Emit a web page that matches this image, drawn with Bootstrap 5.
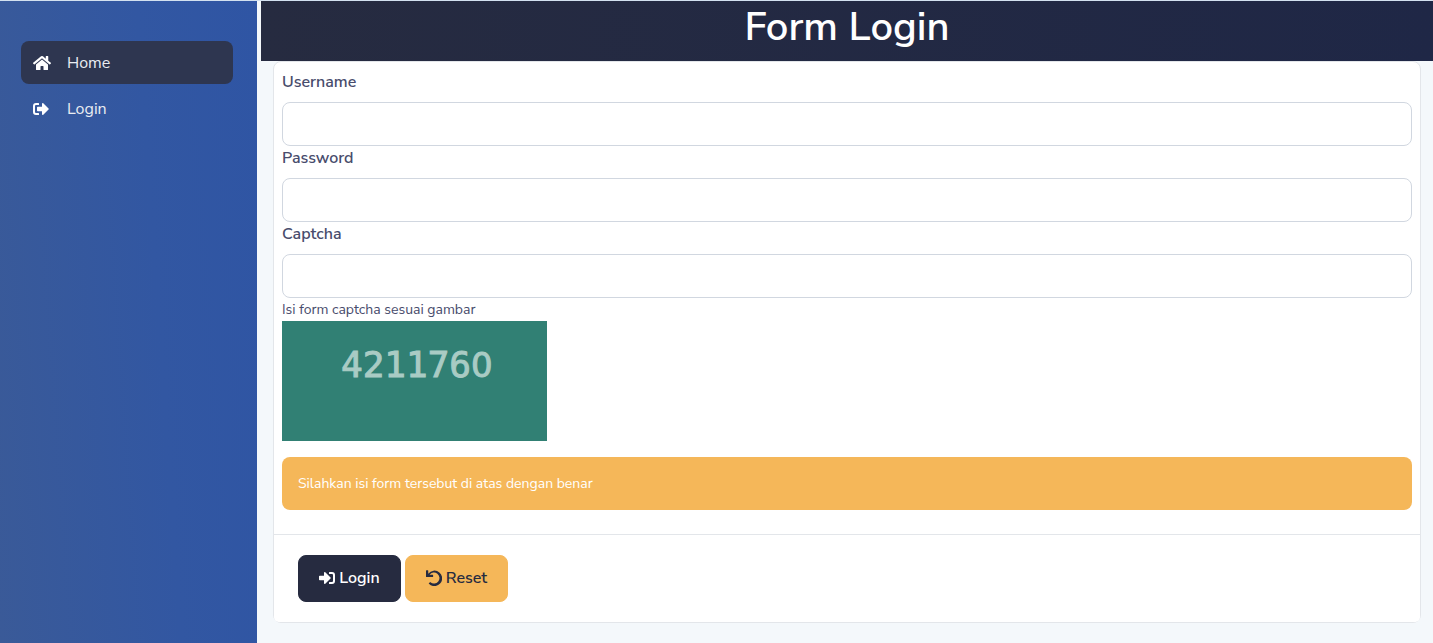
<!DOCTYPE html>
<html lang="id">
<head>
<meta charset="utf-8">
<meta name="viewport" content="width=device-width, initial-scale=1">
<title>Form Login</title>
<link href="https://cdn.jsdelivr.net/npm/bootstrap@5.3.0/dist/css/bootstrap.min.css" rel="stylesheet">
<style>
  body { font-family: "Nunito Sans", Nunito, Lato, sans-serif; font-size: 16px; line-height: 24px; color: #484c6c; background: #f4f8fb; border-top: 1px solid #d3e1f0; }
  svg { fill: currentColor; }
  .sidebar { width: 257px; padding: 40px 24px 24px 21px; background: linear-gradient(86deg, #3a5a98, #3257a2 60%, #2f55a4); }
  .sidebar .nav { gap: 3px; }
  .sidebar .nav-link { color: #eaedf2; height: 43px; padding: 0 12px; border-radius: 8px; font-size: 16px; }
  .sidebar .nav-link.active { background: #2e3650; }
  .sidebar .nav-link svg { width: 18px; height: 16px; margin-right: 16px; color: #fff; }
  .content { margin-left: 4px; }
  .page-title { height: 60px; font-size: 40px; line-height: 52px; font-weight: 600; color: #fff; background: linear-gradient(90deg, #262b40, #1f2746); }
  .login-card { border-color: #e3e6ea; border-radius: 8px; }
  .form-label { font-size: 16px; line-height: 24px; font-weight: 600; margin-bottom: 8px; }
  .login-card .form-control { height: 44px; border-color: #d1d7e0; border-radius: 8px; }
  .login-card .form-text { font-size: 14px; line-height: 23px; margin: 0; color: #484c6c; }
  .captcha { width: 265px; height: 120px; background: #318074; }
  .captcha text { font: 36px "DejaVu Sans Mono", monospace; fill: #a9cbc4; stroke: #a9cbc4; stroke-width: 1px; }
  .captcha .zero { font: 34px "DejaVu Sans", sans-serif; }
  .alert-note { background: #f5b759; color: #fff; border: 0; border-radius: 8px; font-size: 14px; line-height: 21px; padding: 16px; margin: 16px 0; }
  .login-card .card-footer { background: #fff; border-color: #e3e6ea; padding: 20px 24px; }
  .login-card .btn { width: 103px; height: 47px; padding: 0 0 2px; font-size: 16px; font-weight: 600; border-radius: 8px; }
  .login-card .btn svg { width: 16px; height: 16px; }
  .btn-dark-navy, .btn-dark-navy:hover { background: #262b40; color: #fff; border-color: #262b40; }
  .btn-amber, .btn-amber:hover { background: #f5b759; color: #262b40; border-color: #f5b759; }
</style>
</head>
<body class="d-flex min-vh-100">
<nav class="sidebar flex-shrink-0" aria-label="Menu">
  <ul class="nav flex-column">
    <li class="nav-item"><a class="nav-link active d-flex align-items-center" href="#">
      <svg viewBox="0 0 576 512" aria-hidden="true"><path d="M280 148 96 300v164a16 16 0 0 0 16 16h112a16 16 0 0 0 16-16v-96a16 16 0 0 1 16-16h64a16 16 0 0 1 16 16v96a16 16 0 0 0 16 16h112a16 16 0 0 0 16-16V300L296 148a12 12 0 0 0-16 0zm291 103-83-69V44a12 12 0 0 0-12-12h-56a12 12 0 0 0-12 12v72l-89-73a48 48 0 0 0-61 0L5 251a12 12 0 0 0-2 17l26 31a12 12 0 0 0 17 2l234-193a12 12 0 0 1 16 0l235 193a12 12 0 0 0 17-2l25-31a12 12 0 0 0-2-17z"/></svg>Home</a></li>
    <li class="nav-item"><a class="nav-link d-flex align-items-center" href="#">
      <svg viewBox="0 0 576 512" preserveAspectRatio="xMinYMid meet" aria-hidden="true"><path d="M497 273 329 441c-15 15-41 5-41-17v-96H152a24 24 0 0 1-24-24v-96a24 24 0 0 1 24-24h136V88c0-21 26-32 41-17l168 168a24 24 0 0 1 0 34zM192 436v-40a12 12 0 0 0-12-12H96a32 32 0 0 1-32-32V160a32 32 0 0 1 32-32h84a12 12 0 0 0 12-12V76a12 12 0 0 0-12-12H96a96 96 0 0 0-96 96v192a96 96 0 0 0 96 96h84a12 12 0 0 0 12-12z"/></svg>Login</a></li>
  </ul>
</nav>
<main class="content flex-grow-1">
  <h1 class="page-title text-center mb-0">Form Login</h1>
  <div class="container-fluid">
    <form class="card login-card">
      <div class="card-body p-2">
        <label class="form-label d-block" for="username">Username</label>
        <input class="form-control" id="username" type="text">
        <label class="form-label d-block" for="password">Password</label>
        <input class="form-control" id="password" type="password">
        <label class="form-label d-block" for="captcha">Captcha</label>
        <input class="form-control" id="captcha" type="text" aria-describedby="captchaHelp">
        <div class="form-text" id="captchaHelp">Isi form captcha sesuai gambar</div>
        <svg class="captcha d-block" viewBox="0 0 265 120" role="img" aria-label="Captcha"><text x="59" y="56">421176<tspan class="zero">0</tspan></text></svg>
        <div class="alert alert-note" role="alert">Silahkan isi form tersebut di atas dengan benar</div>
      </div>
      <div class="card-footer d-flex gap-1">
        <button class="btn btn-dark-navy d-flex align-items-center justify-content-center gap-1" type="submit">
          <svg viewBox="0 0 512 512" aria-hidden="true"><path d="M416 448h-84a12 12 0 0 1-12-12v-40a12 12 0 0 1 12-12h84a32 32 0 0 0 32-32V160a32 32 0 0 0-32-32h-84a12 12 0 0 1-12-12V76a12 12 0 0 1 12-12h84a96 96 0 0 1 96 96v192a96 96 0 0 1-96 96zm-47-209L201 71c-15-15-41-5-41 17v96H24a24 24 0 0 0-24 24v96a24 24 0 0 0 24 24h136v96c0 22 26 32 41 17l168-168a24 24 0 0 0 0-34z"/></svg>Login</button>
        <button class="btn btn-amber d-flex align-items-center justify-content-center gap-1" type="reset">
          <svg viewBox="0 0 512 512" aria-hidden="true"><path d="M12 8h48a12 12 0 0 1 12 12v97A248 248 0 1 1 93 443a12 12 0 0 1-1-17l34-34a12 12 0 0 1 16-1A176 176 0 1 0 114 152h102a12 12 0 0 1 12 12v48a12 12 0 0 1-12 12H12a12 12 0 0 1-12-12V20A12 12 0 0 1 12 8z"/></svg>Reset</button>
      </div>
    </form>
  </div>
</main>
<script src="https://cdn.jsdelivr.net/npm/bootstrap@5.3.0/dist/js/bootstrap.bundle.min.js"></script>
</body>
</html>
